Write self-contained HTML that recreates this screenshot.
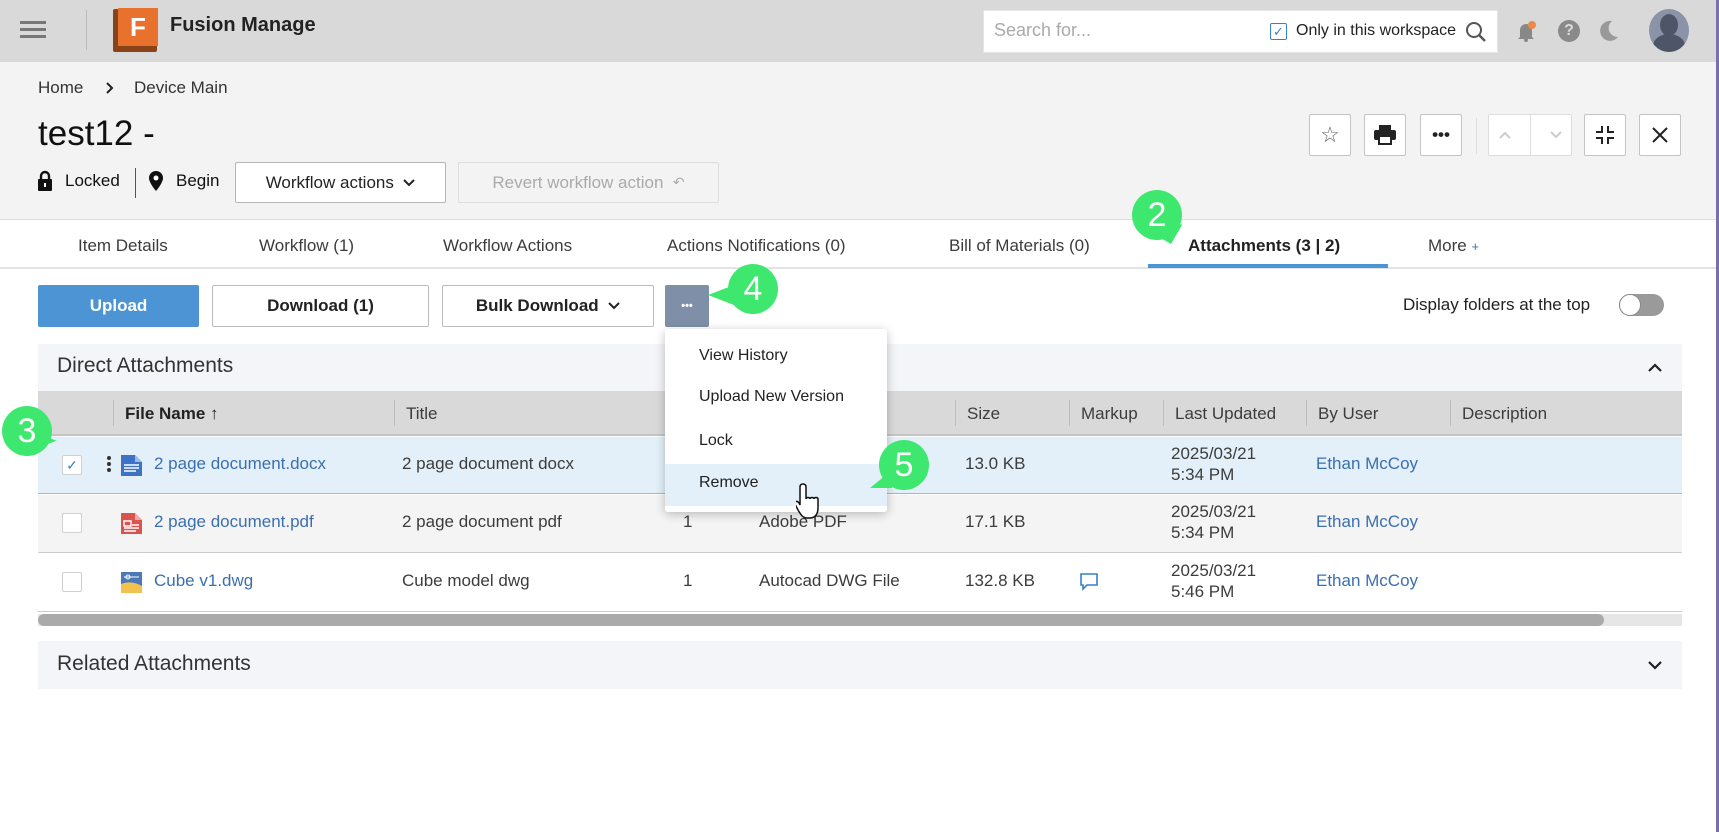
<!DOCTYPE html>
<html><head><meta charset="utf-8"><style>
*{box-sizing:border-box;margin:0;padding:0}
body{width:1719px;height:832px;position:relative;overflow:hidden;background:#fff;font-family:"Liberation Sans",sans-serif;color:#3c3c3c;font-size:17px}
.a{position:absolute;white-space:nowrap}
.btn{position:absolute;border:1px solid #c4c4c4;border-radius:2px;background:#fff;display:flex;align-items:center;justify-content:center}
.badge{position:absolute;width:50px;height:50px;border-radius:50%;background:#3ee86e;color:#fff;font-size:34px;display:flex;align-items:center;justify-content:center}
.lnk{color:#3a6fb0}
.hd{position:absolute;top:391px;height:45px;line-height:45px;font-size:17px;color:#3c3c3c}
.dv{position:absolute;top:400px;width:1px;height:26px;background:#bdbdbd}
.cb{position:absolute;width:20px;height:20px;border:1px solid #d0d0d0;border-radius:2px;background:#fff}
</style></head><body>
<div class="a" style="left:0;top:0;width:1719px;height:62px;background:#d9d9d9"></div>
<div class="a" style="left:20px;top:21px;width:26px;height:3px;background:#777;box-shadow:0 7px 0 #777,0 14px 0 #777"></div>
<div class="a" style="left:86px;top:10px;width:1px;height:40px;background:#bbb"></div>
<div class="a" style="left:113px;top:9px;width:44px;height:43px;background:#8a4219;border-radius:2px"></div>
<div class="a" style="left:118px;top:8px;width:40px;height:38px;background:#e8712d;color:#fff;font-weight:bold;font-size:26px;text-align:center;line-height:38px">F</div>
<div class="a" style="left:170px;top:14px;font-size:20px;color:#222;font-weight:bold">Fusion Manage</div>
<div class="a" style="left:983px;top:10px;width:515px;height:43px;background:#fff;border:1px solid #e5e5e5"></div>
<div class="a" style="left:994px;top:20px;font-size:18px;color:#aaa">Search for...</div>
<div class="a" style="left:1270px;top:23px;width:17px;height:17px;border:1px solid #3a7fc8;border-radius:2px;color:#3a7fc8;font-size:13px;text-align:center;line-height:15px">✓</div>
<div class="a" style="left:1296px;top:22px;font-size:16px;color:#222">Only in this workspace</div>
<svg class="a" style="left:1464px;top:20px" width="24" height="24" viewBox="0 0 24 24"><circle cx="10" cy="10" r="7" fill="none" stroke="#555" stroke-width="2"/><path d="M15 15l6 6" stroke="#555" stroke-width="2.4"/></svg>
<svg class="a" style="left:1516px;top:19px" width="22" height="24" viewBox="0 0 22 24"><path d="M4 18V11a6 6 0 0 1 12 0v7l2 2H2z" fill="#888"/><circle cx="10" cy="21" r="2" fill="#888"/><circle cx="16" cy="6" r="4" fill="#ea8a4a"/></svg>
<div class="a" style="left:1558px;top:20px;width:22px;height:22px;border-radius:50%;background:#8a8a8a;color:#d9d9d9;font-weight:bold;font-size:16px;text-align:center;line-height:22px">?</div>
<svg class="a" style="left:1598px;top:19px" width="22" height="24" viewBox="0 0 22 24"><path d="M14 2a10 10 0 1 0 6 16A9 9 0 0 1 14 2z" fill="#999"/></svg>
<div class="a" style="left:1649px;top:9px;width:40px;height:43px;border-radius:50%;background:#8a93a8;overflow:hidden"><div style="position:absolute;left:11px;top:5px;width:18px;height:22px;border-radius:50%;background:#4e5566"></div><div style="position:absolute;left:4px;top:25px;width:32px;height:24px;border-radius:50% 50% 0 0;background:#4e5566"></div></div>
<div class="a" style="left:1716px;top:0;width:3px;height:832px;background:#7a6fa8"></div>
<div class="a" style="left:0;top:62px;width:1716px;height:157px;background:#f3f3f3"></div>
<div class="a" style="left:38px;top:78px;font-size:17px;color:#333">Home</div>
<svg class="a" style="left:106px;top:82px" width="8" height="12" viewBox="0 0 8 12"><path d="M1 1l5 5-5 5" fill="none" stroke="#222" stroke-width="2"/></svg>
<div class="a" style="left:134px;top:78px;font-size:17px;color:#333">Device Main</div>
<div class="a" style="left:38px;top:114px;font-size:35px;color:#111">test12 -</div>
<svg class="a" style="left:37px;top:170px" width="16" height="22" viewBox="0 0 16 22"><rect x="1" y="9" width="14" height="12" rx="1" fill="#111"/><path d="M4 9V6a4 4 0 0 1 8 0v3" fill="none" stroke="#111" stroke-width="2.4"/><rect x="7" y="13" width="2" height="4" fill="#fff"/></svg>
<div class="a" style="left:65px;top:171px;color:#111">Locked</div>
<div class="a" style="left:135px;top:168px;width:1px;height:30px;background:#555"></div>
<svg class="a" style="left:148px;top:170px" width="16" height="22" viewBox="0 0 16 22"><path d="M8 1a7 7 0 0 1 7 7c0 5-7 13-7 13S1 13 1 8a7 7 0 0 1 7-7z" fill="#111"/><circle cx="8" cy="8" r="2.5" fill="#fff"/></svg>
<div class="a" style="left:176px;top:171px;color:#111">Begin</div>
<div class="btn" style="left:235px;top:162px;width:211px;height:41px;border-color:#b5b5b5;color:#222">Workflow actions&nbsp;&nbsp;<svg width="12" height="8" viewBox="0 0 12 8"><path d="M1 1l5 5 5-5" fill="none" stroke="#222" stroke-width="2"/></svg></div>
<div class="btn" style="left:458px;top:162px;width:261px;height:41px;border-color:#ddd;background:#f3f3f3;color:#aaa">Revert workflow action &nbsp;<span style="font-size:14px">↶</span></div>
<div class="btn" style="left:1309px;top:114px;width:42px;height:42px;color:#666;font-size:22px">☆</div>
<div class="btn" style="left:1364px;top:114px;width:42px;height:42px"><svg width="22" height="20" viewBox="0 0 22 20"><rect x="5" y="0" width="12" height="5" fill="#222"/><rect x="0" y="5" width="22" height="10" rx="2" fill="#222"/><rect x="5" y="11" width="12" height="8" fill="#fff" stroke="#222" stroke-width="2"/></svg></div>
<div class="btn" style="left:1420px;top:114px;width:42px;height:42px;font-weight:bold;color:#222">•••</div>
<div class="a" style="left:1476px;top:118px;width:1px;height:36px;background:#ddd"></div>
<div class="btn" style="left:1488px;top:114px;width:84px;height:42px;border-color:#ddd;justify-content:space-around"><svg width="12" height="8" viewBox="0 0 12 8"><path d="M1 7l5-5 5 5" fill="none" stroke="#ccc" stroke-width="2"/></svg><span style="width:1px;height:40px;background:#ddd"></span><svg width="12" height="8" viewBox="0 0 12 8"><path d="M1 1l5 5 5-5" fill="none" stroke="#ccc" stroke-width="2"/></svg></div>
<div class="btn" style="left:1584px;top:114px;width:42px;height:42px"><svg width="18" height="18" viewBox="0 0 18 18" stroke="#222" stroke-width="2" fill="none"><path d="M6 0v6H0M12 0v6h6M6 18v-6H0M12 18v-6h6"/></svg></div>
<div class="btn" style="left:1639px;top:114px;width:42px;height:42px"><svg width="16" height="16" viewBox="0 0 16 16" stroke="#222" stroke-width="2"><path d="M1 1l14 14M15 1L1 15"/></svg></div>
<div class="a" style="left:0;top:219px;width:1716px;height:1px;background:#ddd"></div>
<div class="a" style="left:0;top:267px;width:1716px;height:2px;background:#e3e3e3"></div>
<div class="a" style="left:78px;top:236px">Item Details</div>
<div class="a" style="left:259px;top:236px">Workflow (1)</div>
<div class="a" style="left:443px;top:236px">Workflow Actions</div>
<div class="a" style="left:667px;top:236px">Actions Notifications (0)</div>
<div class="a" style="left:949px;top:236px">Bill of Materials (0)</div>
<div class="a" style="left:1188px;top:236px;font-weight:bold;color:#222">Attachments (3 | 2)</div>
<div class="a" style="left:1148px;top:264px;width:240px;height:4px;background:#4b95d4"></div>
<div class="a" style="left:1428px;top:236px">More <span style="font-size:13px;color:#3a6fb0">+</span></div>
<div class="btn" style="left:38px;top:285px;width:161px;height:42px;background:#4d94d5;border-color:#4d94d5;color:#fff;font-weight:bold">Upload</div>
<div class="btn" style="left:212px;top:285px;width:217px;height:42px;border-color:#bbb;color:#222;font-weight:bold">Download (1)</div>
<div class="btn" style="left:442px;top:285px;width:212px;height:42px;border-color:#bbb;color:#222;font-weight:bold">Bulk Download&nbsp;&nbsp;<svg width="12" height="8" viewBox="0 0 12 8"><path d="M1 1l5 5 5-5" fill="none" stroke="#222" stroke-width="2"/></svg></div>
<div class="btn" style="left:665px;top:285px;width:44px;height:42px;background:#7f8fa8;border-color:#7f8fa8;color:#fff;font-size:11px;font-weight:bold">•••</div>
<div class="a" style="left:1403px;top:295px;color:#222">Display folders at the top</div>
<div class="a" style="left:1619px;top:294px;width:45px;height:22px;border-radius:11px;background:#9a9a9a"></div>
<div class="a" style="left:1619px;top:294px;width:22px;height:22px;border-radius:50%;background:#fff;border:1.5px solid #888"></div>
<div class="a" style="left:38px;top:344px;width:1644px;height:47px;background:#f4f5f8"></div>
<div class="a" style="left:57px;top:354px;font-size:21px;color:#333">Direct Attachments</div>
<svg class="a" style="left:1648px;top:363px" width="14" height="9" viewBox="0 0 14 9"><path d="M1 8l6-6 6 6" fill="none" stroke="#222" stroke-width="2.2"/></svg>
<div class="a" style="left:38px;top:391px;width:1644px;height:45px;background:#d9d9d9;border-bottom:2px solid #c4c4c4"></div>
<div class="dv" style="left:113px"></div><div class="hd" style="left:125px;font-weight:bold;color:#222">File Name <span style="font-weight:normal">↑</span></div>
<div class="dv" style="left:394px"></div><div class="hd" style="left:406px">Title</div>
<div class="dv" style="left:955px"></div><div class="hd" style="left:967px">Size</div>
<div class="dv" style="left:1069px"></div><div class="hd" style="left:1081px">Markup</div>
<div class="dv" style="left:1163px"></div><div class="hd" style="left:1175px">Last Updated</div>
<div class="dv" style="left:1306px"></div><div class="hd" style="left:1318px">By User</div>
<div class="dv" style="left:1450px"></div><div class="hd" style="left:1462px">Description</div>
<div class="a" style="left:38px;top:437px;width:1644px;height:57px;background:#e3f0f9;border-bottom:1.5px solid #8fbde3"></div>
<div class="a" style="left:38px;top:495px;width:1644px;height:58px;background:#f4f4f4;border-bottom:1.5px solid #ccc"></div>
<div class="a" style="left:38px;top:554px;width:1644px;height:58px;background:#fff;border-bottom:1.5px solid #ccc"></div>
<div class="cb" style="left:62px;top:455px;color:#3a7fc8;font-size:14px;text-align:center;line-height:18px">✓</div>
<div class="cb" style="left:62px;top:513px"></div>
<div class="cb" style="left:62px;top:572px"></div>
<div class="a" style="left:107px;top:456px;width:4px;height:4px;border-radius:50%;background:#333;box-shadow:0 6px 0 #333,0 12px 0 #333"></div>
<svg class="a" style="left:121px;top:455px" width="21" height="21" viewBox="0 0 21 21"><path d="M0 0h14l7 7v14H0z" fill="#3d72c4"/><path d="M14 0v7h7" fill="#9dbbe6"/><path d="M3 10h15M3 13h15M3 16h12" stroke="#fff" stroke-width="1.4"/></svg>
<svg class="a" style="left:121px;top:513px" width="21" height="21" viewBox="0 0 21 21"><path d="M0 0h14l7 7v14H0z" fill="#d9534f"/><path d="M14 0v7h7" fill="#f0a9a7"/><path d="M3 8h7v5H3zM11 12h7M3 15h15M3 18h12" stroke="#fff" stroke-width="1.4" fill="none"/></svg>
<svg class="a" style="left:121px;top:572px" width="21" height="21" viewBox="0 0 21 21"><rect width="21" height="21" fill="#4a78b8"/><path d="M0 12q10-4 21 2v7H0z" fill="#f0c24e"/><path d="M3 5h15" stroke="#fff"/><circle cx="7" cy="5" r="2" fill="none" stroke="#fff"/></svg>
<div class="a lnk" style="left:154px;top:454px">2 page document.docx</div>
<div class="a lnk" style="left:154px;top:512px">2 page document.pdf</div>
<div class="a lnk" style="left:154px;top:571px">Cube v1.dwg</div>
<div class="a" style="left:402px;top:454px">2 page document docx</div>
<div class="a" style="left:402px;top:512px">2 page document pdf</div>
<div class="a" style="left:402px;top:571px">Cube model dwg</div>
<div class="a" style="left:683px;top:512px">1</div>
<div class="a" style="left:683px;top:571px">1</div>
<div class="a" style="left:759px;top:512px">Adobe PDF</div>
<div class="a" style="left:759px;top:571px">Autocad DWG File</div>
<div class="a" style="left:965px;top:454px">13.0 KB</div>
<div class="a" style="left:965px;top:512px">17.1 KB</div>
<div class="a" style="left:965px;top:571px">132.8 KB</div>
<svg class="a" style="left:1080px;top:573px" width="18" height="18" viewBox="0 0 18 18"><path d="M1 1h16v11H7l-4 4v-4H1z" fill="none" stroke="#3a7fc8" stroke-width="1.6"/></svg>
<div class="a" style="left:1171px;top:443px;line-height:21px">2025/03/21<br>5:34 PM</div>
<div class="a" style="left:1171px;top:501px;line-height:21px">2025/03/21<br>5:34 PM</div>
<div class="a" style="left:1171px;top:560px;line-height:21px">2025/03/21<br>5:46 PM</div>
<div class="a lnk" style="left:1316px;top:454px">Ethan McCoy</div>
<div class="a lnk" style="left:1316px;top:512px">Ethan McCoy</div>
<div class="a lnk" style="left:1316px;top:571px">Ethan McCoy</div>
<div class="a" style="left:38px;top:614px;width:1644px;height:12px;background:#e6e6e6"></div>
<div class="a" style="left:38px;top:614px;width:1566px;height:12px;background:#aaa;border-radius:6px"></div>
<div class="a" style="left:38px;top:641px;width:1644px;height:48px;background:#f4f5f8"></div>
<div class="a" style="left:57px;top:652px;font-size:21px;color:#333">Related Attachments</div>
<svg class="a" style="left:1648px;top:661px" width="14" height="9" viewBox="0 0 14 9"><path d="M1 1l6 6 6-6" fill="none" stroke="#222" stroke-width="2.2"/></svg>
<div class="a" style="left:665px;top:329px;width:222px;height:183px;background:#fff;border-radius:3px;box-shadow:0 2px 10px rgba(0,0,0,.25)"></div>
<div class="a" style="left:665px;top:464px;width:222px;height:42px;background:#e3f0f9"></div>
<div class="a" style="left:699px;top:347px;font-size:16px;color:#222">View History</div>
<div class="a" style="left:699px;top:388px;font-size:16px;color:#222">Upload New Version</div>
<div class="a" style="left:699px;top:432px;font-size:16px;color:#222">Lock</div>
<div class="a" style="left:699px;top:474px;font-size:16px;color:#222">Remove</div>
<svg class="a" style="left:796px;top:482px" width="28" height="38" viewBox="0 0 28 38"><path d="M7 2c2 0 3 1 3 3v12c0-2 4-2 4 0 0-2 4-2 4 0 0-2 4-2 4 0v9c0 6-3 10-8 10h-3c-4 0-6-3-9-8l-3-6c-1-2 2-4 4-1l1 2V5c0-2 1-3 3-3z" fill="#fff" stroke="#111" stroke-width="1.5"/></svg>
<div class="a" style="left:1156px;top:218px;width:22px;height:22px;background:#3ee86e;transform:rotate(30deg)"></div>
<div class="badge" style="left:1132px;top:190px">2</div>
<div class="a" style="left:30px;top:436px;width:0;height:0;border-left:24px solid #3ee86e;border-bottom:20px solid transparent;transform:rotate(20deg)"></div>
<div class="badge" style="left:2px;top:406px">3</div>
<div class="a" style="left:708px;top:285px;width:0;height:0;border-right:26px solid #3ee86e;border-top:10px solid transparent;border-bottom:10px solid transparent"></div>
<div class="badge" style="left:728px;top:264px">4</div>
<div class="a" style="left:870px;top:470px;width:0;height:0;border-right:22px solid #3ee86e;border-top:18px solid transparent"></div>
<div class="badge" style="left:879px;top:440px">5</div>
</body></html>
